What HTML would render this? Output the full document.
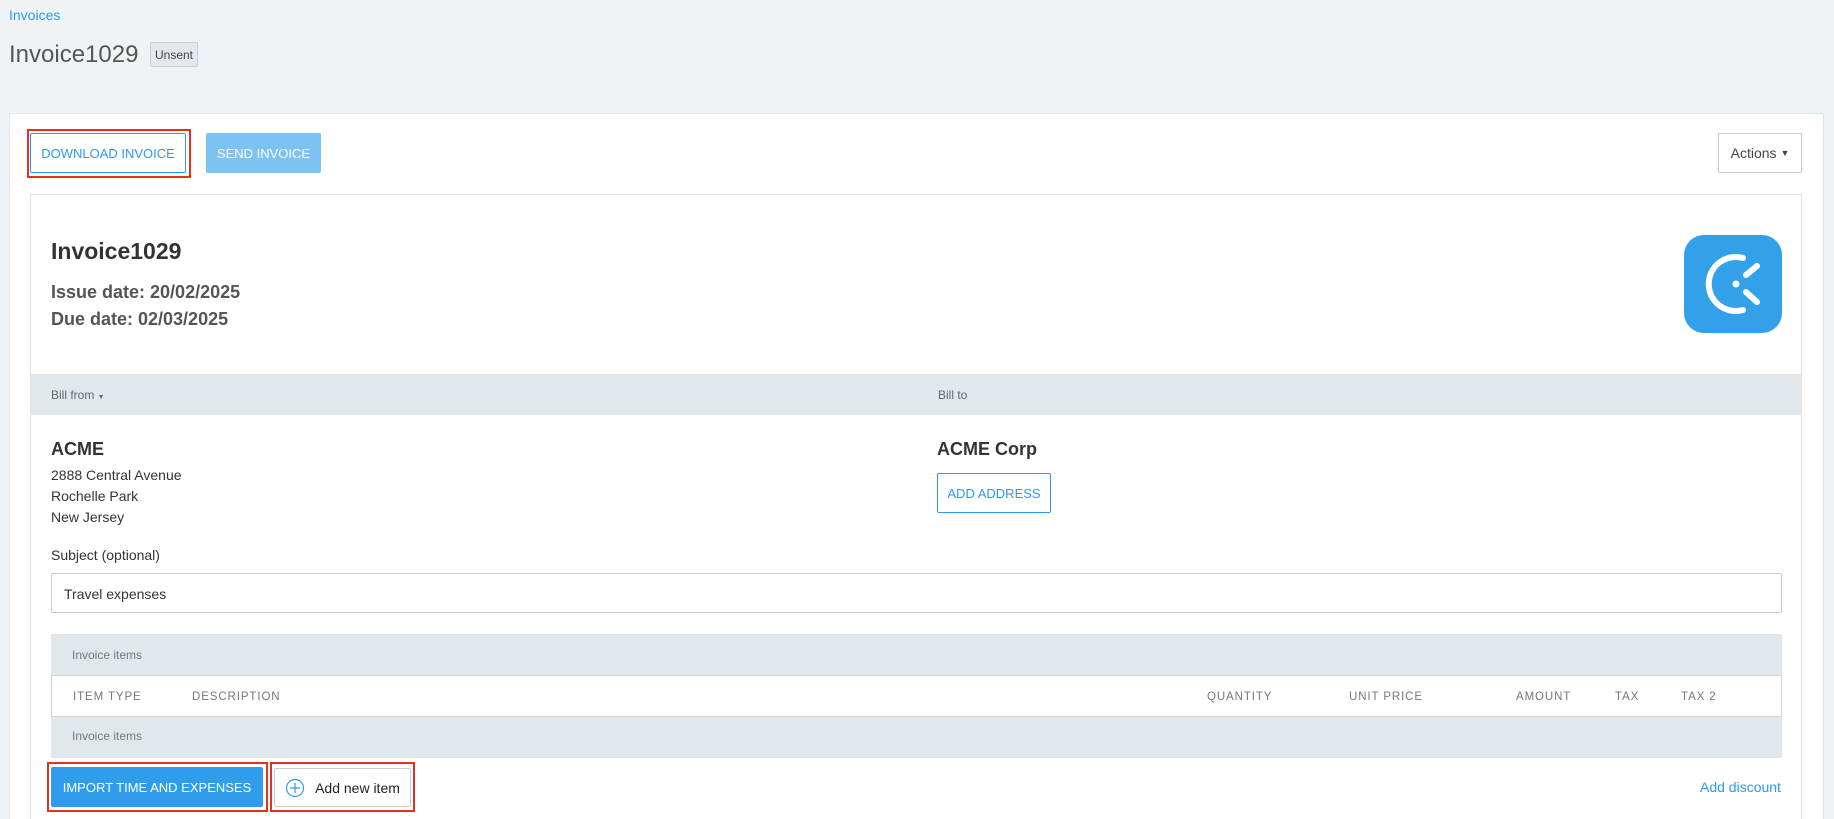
<!DOCTYPE html>
<html style="overflow:hidden;height:819px"><head><meta charset="utf-8"><style>
*{box-sizing:border-box;margin:0;padding:0}
body{width:1834px;height:819px;overflow:hidden;background:#f0f3f6;font-family:"Liberation Sans",sans-serif;color:#333;position:relative}
.a{position:absolute}
.btn{position:absolute;display:flex;align-items:center;justify-content:center;font-size:13px;border-radius:2px}
.red{position:absolute;border:2px solid #e0321c}
.th{position:absolute;top:691px;font-size:11.5px;letter-spacing:0.9px;color:#777}
</style></head><body>
<div class="a" style="left:9px;top:7px;font-size:14px;color:#2b9aee">Invoices</div>
<div class="a" style="left:9px;top:41px;font-size:24px;color:#555">Invoice1029</div>
<div class="a" style="left:150px;top:42px;width:48px;height:25px;background:#e4e8ec;border:1px solid #c8ced4;border-radius:2px;font-size:12px;color:#444;display:flex;align-items:center;justify-content:center">Unsent</div>

<div class="a" style="left:9px;top:113px;width:1815px;height:720px;background:#fff;border:1px solid #dfe4ea;border-bottom:none"></div>
<div class="red" style="left:27px;top:129px;width:164px;height:49px"></div>
<div class="btn" style="left:30px;top:133px;width:156px;height:40px;border:1px solid #2b9aee;color:#2b9aee">DOWNLOAD INVOICE</div>
<div class="btn" style="left:206px;top:133px;width:115px;height:40px;background:#7cc2f3;color:#fff">SEND INVOICE</div>
<div class="btn" style="left:1718px;top:133px;width:84px;height:40px;border:1px solid #c5ccd4;color:#444;font-size:14px">Actions&nbsp;<span style="font-size:9px">▼</span></div>

<div class="a" style="left:30px;top:194px;width:1772px;height:640px;border:1px solid #dfe4ea;border-bottom:none"></div>
<div class="a" style="left:51px;top:238px;font-size:23px;font-weight:bold;color:#333">Invoice1029</div>
<div class="a" style="left:51px;top:282px;font-size:18px;font-weight:bold;color:#555">Issue date: 20/02/2025</div>
<div class="a" style="left:51px;top:309px;font-size:18px;font-weight:bold;color:#555">Due date: 02/03/2025</div>
<div class="a" style="left:1684px;top:235px;width:98px;height:98px;background:#33a0ea;border-radius:20px">
<svg width="98" height="98" viewBox="0 0 98 98"><path d="M59 23 A27 27 0 1 0 59 75" fill="none" stroke="#fff" stroke-width="6" stroke-linecap="round"/><path d="M62 40 L73 31 M62 57 L73 67" stroke="#fff" stroke-width="6" stroke-linecap="round"/><circle cx="52" cy="49" r="3.5" fill="#fff"/></svg></div>

<div class="a" style="left:31px;top:374px;width:1771px;height:41px;background:#e2e7ec"></div>
<div class="a" style="left:51px;top:388px;font-size:12px;color:#666">Bill from <span style="font-size:7px">▼</span></div>
<div class="a" style="left:938px;top:388px;font-size:12px;color:#666">Bill to</div>
<div class="a" style="left:51px;top:439px;font-size:18px;font-weight:bold;color:#333">ACME</div>
<div class="a" style="left:51px;top:465px;font-size:14px;line-height:21px;color:#333">2888 Central Avenue<br>Rochelle Park<br>New Jersey</div>
<div class="a" style="left:937px;top:439px;font-size:18px;font-weight:bold;color:#333">ACME Corp</div>
<div class="btn" style="left:937px;top:473px;width:114px;height:40px;border:1px solid #2b9aee;color:#2b9aee">ADD ADDRESS</div>

<div class="a" style="left:51px;top:547px;font-size:14px;color:#333">Subject (optional)</div>
<div class="a" style="left:51px;top:573px;width:1731px;height:40px;border:1px solid #c5ccd4;border-radius:2px;padding:12px 12px;font-size:14px;color:#333">Travel expenses</div>

<div class="a" style="left:51px;top:634px;width:1731px;height:124px;background:#e2e7ec"></div>
<div class="a" style="left:72px;top:648px;font-size:12px;color:#777">Invoice items</div>
<div class="a" style="left:51px;top:675px;width:1731px;height:42px;background:#fff;border:1px solid #cfd5dc"></div>
<div class="th" style="left:73px">ITEM TYPE</div>
<div class="th" style="left:192px">DESCRIPTION</div>
<div class="th" style="left:1207px">QUANTITY</div>
<div class="th" style="left:1349px">UNIT PRICE</div>
<div class="th" style="left:1516px">AMOUNT</div>
<div class="th" style="left:1615px">TAX</div>
<div class="th" style="left:1681px">TAX 2</div>
<div class="a" style="left:72px;top:729px;font-size:12px;color:#777">Invoice items</div>

<div class="red" style="left:47px;top:762px;width:221px;height:50px"></div>
<div class="btn" style="left:51px;top:767px;width:212px;height:40px;background:#2f9deb;color:#fff">IMPORT TIME AND EXPENSES</div>
<div class="red" style="left:270px;top:762px;width:145px;height:50px"></div>
<div class="btn" style="left:274px;top:768px;width:137px;height:39px;border:1px solid #c5ccd4;color:#222;font-size:14px"><svg width="20" height="20" style="margin-right:10px"><circle cx="10" cy="10" r="8.5" fill="none" stroke="#2b9aee" stroke-width="1.2"/><path d="M10 5v10M5 10h10" stroke="#2b9aee" stroke-width="1.2"/></svg>Add new item</div>
<div class="a" style="left:1700px;top:779px;font-size:14px;color:#2b9aee">Add discount</div>
</body></html>
